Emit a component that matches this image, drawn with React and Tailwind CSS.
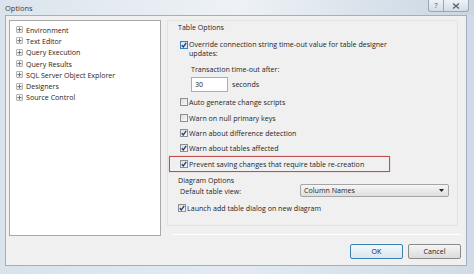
import React from 'react';

const font = { fontFamily: '"Open Sans", "Noto Sans", sans-serif' };

function Check({ checked, focus }) {
  return (
    <span
      className={
        'w-[8px] h-[8px] shrink-0 flex items-center justify-center border ' +
        (focus
          ? 'border-[#3c7fb1] bg-[#d6e8f8]'
          : 'border-[#8e8f8f] bg-gradient-to-br from-[#dcdcdc] to-[#fbfbfb]')
      }
    >
      {checked && (
        <svg width="6" height="6" viewBox="0 0 6 6">
          <path d="M0.8 3.2 L2.3 4.9 L5.2 0.8" fill="none" stroke="#1f3f7a" strokeWidth="1.3" />
        </svg>
      )}
    </span>
  );
}

function Option({ checked, focus, children, className = '' }) {
  return (
    <div className={'flex items-center h-[10px] pl-[12px] gap-[1px] ' + className}>
      <Check checked={checked} focus={focus} />
      <span className="leading-[10px]">{children}</span>
    </div>
  );
}

function TreeItem({ label }) {
  return (
    <div className="flex items-center h-[11.3px] pl-[6px] gap-[3px]">
      <span className="w-[7px] h-[7px] border border-[#b4b4b4] rounded-[1px] bg-gradient-to-b from-white to-[#e4e4e4] flex items-center justify-center">
        <svg width="5" height="5" viewBox="0 0 5 5">
          <path d="M0.5 2.5 H4.5 M2.5 0.5 V4.5" stroke="#6a6a6a" strokeWidth="0.9" />
        </svg>
      </span>
      <span className="leading-[10px]">{label}</span>
    </div>
  );
}

export default function App() {
  const tree = [
    'Environment',
    'Text Editor',
    'Query Execution',
    'Query Results',
    'SQL Server Object Explorer',
    'Designers',
    'Source Control',
  ];

  return (
    <div
      style={font}
      className="w-[474px] h-[274px] overflow-hidden flex flex-col bg-gradient-to-r from-[#d9e3ec] via-[#e3eaf1] to-[#cfdbe6] text-[7.1px] text-[#1e1e1e]"
    >
      {/* title bar */}
      <div className="h-[15px] flex items-start shrink-0 bg-gradient-to-r from-[#dbe4ed] via-[#eef2f6] to-[#c9d6e2]">
        <span className="pl-[5px] pt-[3px] text-[7.5px] leading-[10px] text-[#3a3a3a]">Options</span>
        <div className="ml-auto mr-[5px] flex">
          <div className="w-[16px] h-[12px] border border-[#9aa6b2] border-t-0 rounded-bl-[3px] bg-gradient-to-b from-[#eef2f6] to-[#d3dce6] flex items-center justify-center text-[7px] leading-none text-[#4a5564]">
            ?
          </div>
          <div className="w-[25px] h-[12px] border border-l-0 border-[#9aa6b2] border-t-0 rounded-br-[3px] bg-gradient-to-b from-[#eef2f6] to-[#d3dce6] flex items-center justify-center">
            <svg width="8" height="6" viewBox="0 0 8 6">
              <path d="M1 0.5 L7 5.5 M7 0.5 L1 5.5" stroke="#56606c" strokeWidth="1.3" />
            </svg>
          </div>
        </div>
      </div>

      {/* client */}
      <div className="ml-[5px] mr-[7px] h-[251px] bg-[#f0f0f0] border border-[#a3afbb] flex">
        {/* tree */}
        <div className="ml-[3px] mt-[4px] w-[152px] h-[216px] bg-white border border-[#a9a9a9] pt-[3px] shrink-0">
          {tree.map((t) => (
            <TreeItem key={t} label={t} />
          ))}
        </div>

        {/* right column */}
        <div className="ml-[6px] flex-1 flex flex-col pr-[5px]">
          <div className="mt-[4px] mr-[3px] h-[206px] border border-[#e3e3e3] flex flex-col">
            <div className="mt-[1px] h-[10px] leading-[10px] pl-[10px]">Table Options</div>

            <div className="mt-[8px] flex pl-[12px] gap-[1px]">
              <div className="h-[9px] flex items-center">
                <Check checked focus />
              </div>
              <div className="leading-[9px]">
                Override connection string time-out value for table designer
                <br />
                updates:
              </div>
            </div>

            <div className="mt-[6px] h-[10px] leading-[10px] pl-[23px]">Transaction time-out after:</div>

            <div className="mt-[3px] h-[15px] flex items-center pl-[23px]">
              <div className="w-[37px] h-[15px] bg-white border border-[#abadb3] flex items-center pl-[3px]">30</div>
              <span className="ml-[4px]">seconds</span>
            </div>

            <Option className="mt-[5px]">Auto generate change scripts</Option>
            <Option className="mt-[6px]">Warn on null primary keys</Option>
            <Option checked className="mt-[5px]">Warn about difference detection</Option>
            <Option checked className="mt-[5px]">Warn about tables affected</Option>

            <div className="mt-[3px] ml-[1px] w-[221px] h-[16px] border border-[#c0504d] shadow-[0_0_1px_#d8a0a0] flex items-center pl-[10px] gap-[1px]">
              <Check checked />
              <span className="leading-[10px]">Prevent saving changes that require table re-creation</span>
            </div>

            <div className="mt-[4px] h-[8px] leading-[8px] pl-[10px]">Diagram Options</div>

            <div className="h-[13px] flex items-center pl-[12px]">
              <span className="mt-[2px]">Default table view:</span>
              <div className="ml-auto mr-[8px] w-[149px] h-[13px] border border-[#a5a5a5] rounded-[2px] bg-gradient-to-b from-[#f6f6f6] to-[#dedede] flex items-center pl-[3px] pr-[4px]">
                <span>Column Names</span>
                <svg className="ml-auto" width="5" height="3" viewBox="0 0 5 3">
                  <path d="M0 0 H5 L2.5 3 Z" fill="#222" />
                </svg>
              </div>
            </div>

            <Option checked className="mt-[6px] !pl-[10px]">Launch add table dialog on new diagram</Option>
          </div>

          <div className="mt-[8px] ml-[5px] h-[1px] bg-[#d5d5d5] border-b border-white" />

          <div className="mt-[9px] flex justify-end gap-[5px]">
            <button className="w-[53px] h-[15px] rounded-[2px] border border-[#3c7fb1] bg-gradient-to-b from-[#f4f8fb] to-[#d9e6f0] text-[7.1px] leading-none text-[#222]">
              OK
            </button>
            <button className="w-[53px] h-[15px] rounded-[2px] border border-[#8a8a8a] bg-gradient-to-b from-[#f5f5f5] to-[#dcdcdc] text-[7.1px] leading-none text-[#222]">
              Cancel
            </button>
          </div>
        </div>
      </div>
    </div>
  );
}
